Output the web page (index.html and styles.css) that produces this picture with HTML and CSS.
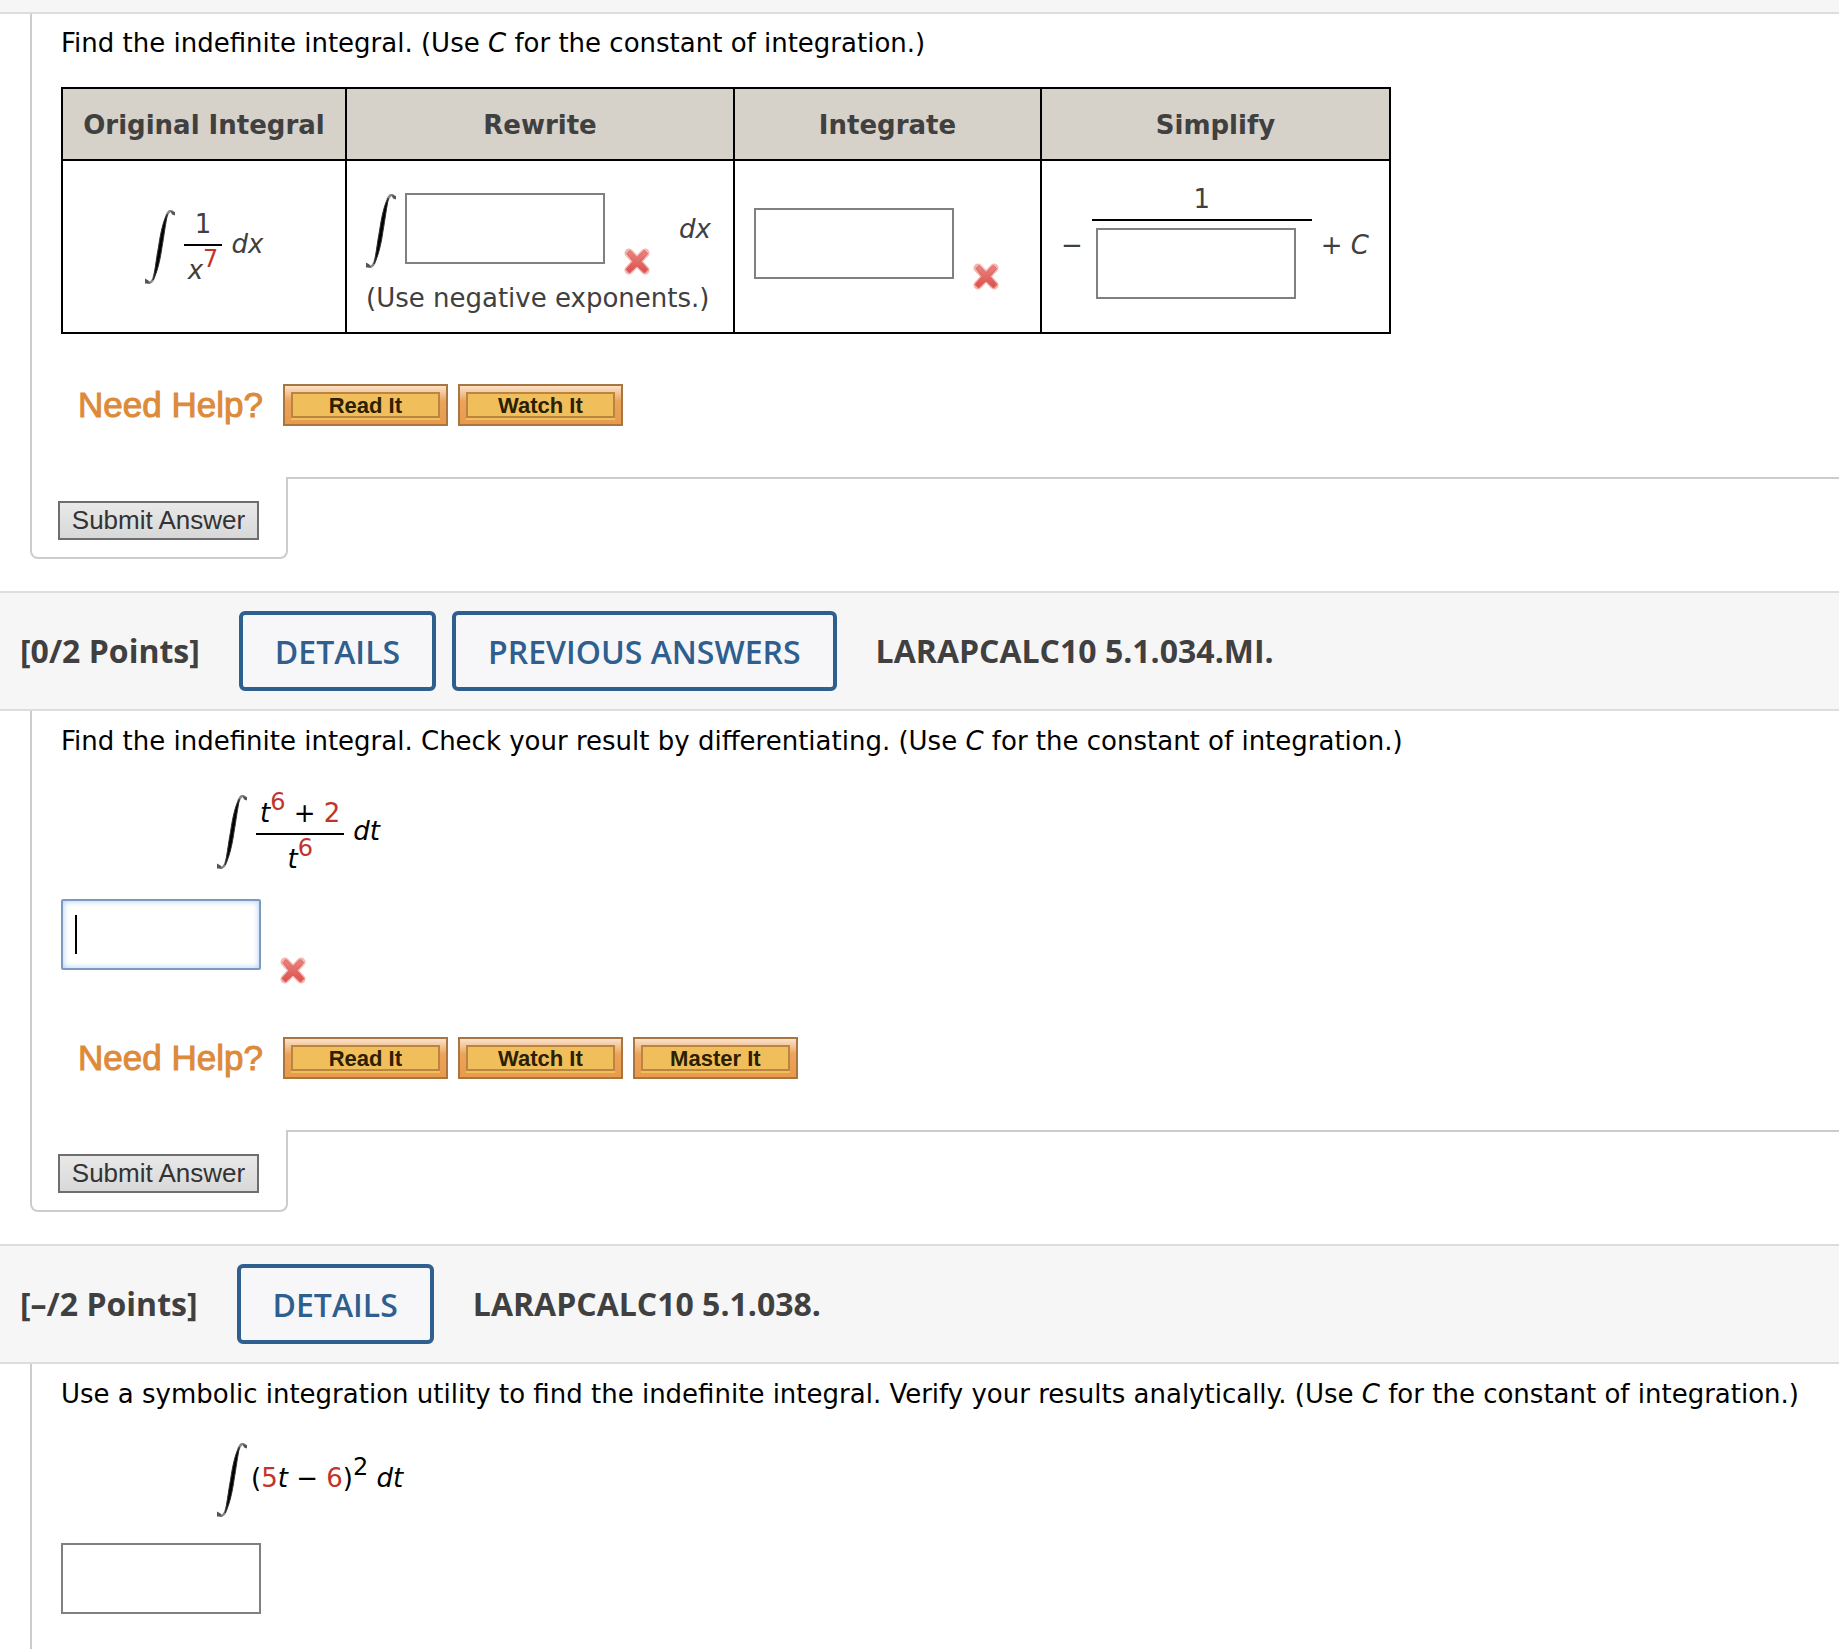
FILE: index.html
```html
<!DOCTYPE html>
<html lang="en">
<head>
    <meta charset="UTF-8">
    <meta name="viewport" content="width=device-width, initial-scale=1.0">
    <title>Indefinite Integrals</title>
    <link rel="stylesheet" href="styles.css">
</head>
<body>
    <!-- shared symbols -->
    <svg class="symbols" aria-hidden="true">
        <defs>
            <linearGradient id="redFill" x1="0" y1="0" x2="0" y2="1">
                <stop offset="0" stop-color="#ea8580"/>
                <stop offset="1" stop-color="#dc4f4b"/>
            </linearGradient>
        </defs>
        <symbol id="integral" viewBox="0 0 30 74">
            <path d="M28 2.500C26 0 23.500 0.500 21.500 6C19 14 17.500 25 15 37C12.500 51 10.500 64 8 69.500C6.500 73 4 73.500 1.500 71.500" fill="none" stroke="#888" stroke-width="2.500"/>
            <path d="M22.500 4C20.500 13 19 26 17 37C15 51 12 63 8 70C10 62 11 50 13.500 37C15.500 23 18.500 9 22.500 4Z" fill="#000" stroke="#333" stroke-width="1"/>
            <path d="M25.500 1L30 2V5.500L27 4.500ZM0 68.500L3.500 70.500L5 73.500H0Z" fill="#555"/>
        </symbol>
        <symbol id="wrong" viewBox="0 0 26 27">
            <path d="M5 5L21 22M21 5L5 22" fill="none" stroke="#f4b5b2" stroke-width="9" stroke-linecap="round"/>
            <path d="M3 5.500L6 2.500L13 9.500L20 2.500L23.500 5.500L17 13.500L24 21.500L20.500 25L13 18L5.500 25L2 21.500L9 13.500Z" fill="url(#redFill)" stroke="#e0605c" stroke-width="1" stroke-linejoin="round"/>
        </symbol>
    </svg>

    <div class="top-strip"></div>

    <!-- Question 1 -->
    <section class="question">
        <div class="question-body">
            <p class="prompt">Find the indefinite integral. (Use <i>C</i> for the constant of integration.)</p>
            <table class="steps">
                <thead>
                    <tr>
                        <th class="col-original">Original Integral</th>
                        <th class="col-rewrite">Rewrite</th>
                        <th class="col-integrate">Integrate</th>
                        <th class="col-simplify">Simplify</th>
                    </tr>
                </thead>
                <tbody>
                    <tr>
                        <td>
                            <div class="math centered">
                                <svg class="integral"><use href="#integral"/></svg>
                                <span class="fraction">
                                    <span class="top">1</span>
                                    <span class="bottom"><i>x</i><sup class="red">7</sup></span>
                                </span>
                                <i>dx</i>
                            </div>
                        </td>
                        <td class="rewrite-cell">
                            <div class="math">
                                <svg class="integral"><use href="#integral"/></svg>
                                <span class="answer">
                                    <input type="text" class="blank" aria-label="Rewrite">
                                    <svg class="wrong" role="img" aria-label="Incorrect"><use href="#wrong"/></svg>
                                </span>
                                <i class="differential">dx</i>
                            </div>
                            <div class="hint">(Use negative exponents.)</div>
                        </td>
                        <td class="integrate-cell">
                            <div class="answer">
                                <input type="text" class="blank" aria-label="Integrate">
                                <svg class="wrong" role="img" aria-label="Incorrect"><use href="#wrong"/></svg>
                            </div>
                        </td>
                        <td class="simplify-cell">
                            <div class="math">
                                <span>−</span>
                                <span class="fraction wide">
                                    <span class="top">1</span>
                                    <span class="bottom"><input type="text" class="blank" aria-label="Simplify"></span>
                                </span>
                                <span>+ <i>C</i></span>
                            </div>
                        </td>
                    </tr>
                </tbody>
            </table>
            <div class="help">
                <span class="help-label">Need Help?</span>
                <button class="help-btn">Read It</button>
                <button class="help-btn">Watch It</button>
            </div>
        </div>
        <div class="question-foot">
            <div class="submit-tab"><button class="submit-btn">Submit Answer</button></div>
            <div class="foot-line"></div>
        </div>
    </section>

    <!-- Question 2 -->
    <section class="question">
        <header class="question-header">
            <span class="points">[0/2 Points]</span>
            <button class="header-btn">DETAILS</button>
            <button class="header-btn">PREVIOUS ANSWERS</button>
            <span class="name">LARAPCALC10 5.1.034.MI.</span>
        </header>
        <div class="question-body">
            <p class="prompt">Find the indefinite integral. Check your result by differentiating. (Use <i>C</i> for the constant of integration.)</p>
            <div class="math equation">
                <svg class="integral"><use href="#integral"/></svg>
                <span class="fraction">
                    <span class="top"><i>t</i><sup class="red">6</sup> + <span class="red">2</span></span>
                    <span class="bottom"><i>t</i><sup class="red">6</sup></span>
                </span>
                <i>dt</i>
            </div>
            <div class="answer main-answer">
                <input type="text" class="blank active" aria-label="Answer">
                <svg class="wrong" role="img" aria-label="Incorrect"><use href="#wrong"/></svg>
            </div>
            <div class="help">
                <span class="help-label">Need Help?</span>
                <button class="help-btn">Read It</button>
                <button class="help-btn">Watch It</button>
                <button class="help-btn">Master It</button>
            </div>
        </div>
        <div class="question-foot">
            <div class="submit-tab"><button class="submit-btn">Submit Answer</button></div>
            <div class="foot-line"></div>
        </div>
    </section>

    <!-- Question 3 -->
    <section class="question last">
        <header class="question-header">
            <span class="points">[–/2 Points]</span>
            <button class="header-btn">DETAILS</button>
            <span class="name">LARAPCALC10 5.1.038.</span>
        </header>
        <div class="question-body">
            <p class="prompt">Use a symbolic integration utility to find the indefinite integral. Verify your results analytically. (Use <i>C</i> for the constant of integration.)</p>
            <div class="math equation tight">
                <svg class="integral"><use href="#integral"/></svg>
                <span class="expression">(<span class="red">5</span><i>t</i> − <span class="red">6</span>)<sup>2</sup> <i>dt</i></span>
            </div>
            <input type="text" class="blank" aria-label="Answer">
        </div>
    </section>
</body>
</html>
```
FILE: styles.css
```css
* {
    box-sizing: border-box;
}
body {
    margin: 0;
    min-height: 100vh;
    display: flex;
    flex-direction: column;
    background: #fff;
    color: #000;
    font-family: Verdana, "DejaVu Sans", sans-serif;
    font-size: 26px;
    line-height: 32px;
}
.symbols {
    position: absolute;
    width: 0;
    height: 0;
}
.top-strip {
    height: 14px;
    background: #f6f6f6;
    border-bottom: 2px solid #ddd;
}

/* Question header */
.question-header {
    display: flex;
    align-items: center;
    padding: 18px 20px;
    background: #f6f6f6;
    border-top: 2px solid #ddd;
    border-bottom: 2px solid #ddd;
    color: #404040;
    font-family: "Open Sans", sans-serif;
    font-size: 32px;
    font-weight: bold;
}
.header-btn {
    height: 80px;
    margin-right: 16px;
    padding: 0 32px;
    border: 4px solid #2f5f8f;
    border-radius: 6px;
    background: #f7f7f9;
    color: #2f5f8f;
    font-family: inherit;
    font-size: 32px;
    font-weight: 600;
    cursor: pointer;
}
.points {
    margin-right: 39px;
}
.name {
    margin-left: 23px;
}

/* Question body */
.question-body {
    margin-left: 30px;
    padding: 13px 24px 51px 29px;
    border-left: 2px solid #ccc;
}
.question-header + .question-body {
    padding-top: 14px;
}
.last,
.last .question-body {
    flex: 1;
}
.last {
    display: flex;
    flex-direction: column;
}
.prompt {
    margin: 0;
}
.red {
    color: #c0342b;
}

/* Math */
.math {
    display: flex;
    align-items: center;
    gap: 9px;
}
.math > i {
    padding-bottom: 6px;
}
.centered {
    justify-content: center;
}
.equation {
    margin: 36px 0 24px;
    padding-left: 156px;
}
.equation .integral {
    margin-bottom: 4px;
}
.equation .fraction {
    padding-top: 4px;
}
.tight {
    gap: 4px;
    margin: 33px 0 26px;
}
.tight .integral {
    margin-bottom: 0;
}
.expression {
    padding-bottom: 4px;
}
.integral {
    width: 30px;
    height: 74px;
    flex: none;
}
.fraction {
    display: inline-flex;
    flex-direction: column;
    text-align: center;
}
.fraction .top {
    padding: 0 4px 4px;
    border-bottom: 2px solid #000;
}
.fraction .bottom {
    padding: 8px 4px 0;
}
sup {
    font-size: 24px;
    line-height: 0;
    vertical-align: 12px;
}

/* Answer blanks */
.blank {
    display: block;
    width: 200px;
    height: 71px;
    padding: 0 12px;
    border: 2px solid #808080;
    background: #fff;
    font: inherit;
}
.active {
    border-color: #7c9abf;
    border-radius: 2px;
    box-shadow: inset 0 0 6px #a9c8f5;
    background: linear-gradient(#000, #000) 12px center / 2px 39px no-repeat #fff;
    outline: none;
}
.answer {
    display: flex;
    align-items: flex-end;
    gap: 19px;
}
.answer .blank {
    margin-bottom: 11px;
}
.main-answer {
    padding-bottom: 3px;
}
.main-answer .blank {
    margin-bottom: 14px;
}
.wrong {
    width: 26px;
    height: 27px;
    flex: none;
}

/* Table */
.steps {
    margin-top: 28px;
    border-collapse: collapse;
    color: #404040;
}
.steps th,
.steps td {
    border: 2px solid #000;
    padding: 0 19px;
}
.steps th {
    height: 72px;
    padding-top: 2px;
    background: #d6d1c9;
    white-space: nowrap;
}
.steps td {
    height: 173px;
}
.col-original {
    width: 284px;
}
.col-rewrite {
    width: 388px;
}
.col-integrate {
    width: 307px;
}
.col-simplify {
    width: 349px;
}
.steps .rewrite-cell {
    padding-top: 14px;
}
.steps .integrate-cell {
    padding-top: 5px;
}
.steps .simplify-cell {
    padding-bottom: 4px;
}
.rewrite-cell .integral {
    margin-bottom: 6px;
}
.rewrite-cell .differential {
    margin-left: 20px;
    padding-bottom: 10px;
}
.hint {
    margin-top: 7px;
}
.wide .bottom {
    padding: 7px 16px 8px 4px;
}

/* Need Help */
.help {
    display: flex;
    align-items: center;
    gap: 10px;
    margin-top: 50px;
    padding-left: 17px;
}
.help-label {
    margin-right: 10px;
    color: #dd8a3a;
    font-family: "Liberation Sans", Arial, sans-serif;
    font-size: 35px;
    -webkit-text-stroke: 1px #dd8a3a;
}
.help-btn {
    width: 165px;
    height: 42px;
    padding: 6px 6px 4px;
    border: 2px solid #a8763e;
    outline: 2px solid #b98540;
    outline-offset: -10px;
    background: linear-gradient(#f1be5c, #f1be5c) content-box, linear-gradient(#fbe3cb, #eca35a 40%, #e89b4c) padding-box;
    color: #2b2000;
    font-family: "Liberation Sans", Arial, sans-serif;
    font-size: 22px;
    font-weight: bold;
    line-height: 28px;
    cursor: pointer;
}

/* Submit */
.question-foot {
    display: flex;
    margin: 0 0 32px 30px;
}
.submit-tab {
    width: 258px;
    padding: 24px 0 17px 26px;
    border: 2px solid #ccc;
    border-top: none;
    border-radius: 0 0 8px 8px;
}
.submit-btn {
    display: block;
    width: 201px;
    height: 39px;
    padding: 0;
    border: 2px solid #6e6e6e;
    background: linear-gradient(#e9e9e9, #d8d8d8);
    color: #333;
    font-family: "Liberation Sans", Arial, sans-serif;
    font-size: 26px;
    cursor: pointer;
}
.foot-line {
    flex: 1;
    border-top: 2px solid #ccc;
}
```
